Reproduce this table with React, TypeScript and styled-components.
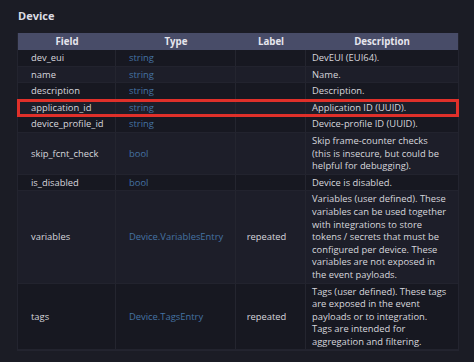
import React from "react";
import styled, { createGlobalStyle } from "styled-components";

const GlobalStyle = createGlobalStyle`
  html, body {
    margin: 0;
    padding: 0;
    background: #1b1c25;
  }
  body {
    font-family: "Open Sans", "Noto Sans", sans-serif;
  }
`;

const Page = styled.div`
  width: 474px;
  height: 362px;
  box-sizing: border-box;
  padding: 8px 15px 0 17px;
  overflow: hidden;
  background: #1b1c25;
`;

const Title = styled.h2`
  margin: 0 0 9px 1px;
  font-size: 11px;
  line-height: 16px;
  font-weight: 700;
  color: #dcdce4;
`;

const Table = styled.div`
  width: 442px;
  border: 1px solid #23242f;
  border-top: none;
  box-sizing: border-box;
`;

const Row = styled.div<{ $dark?: boolean; $header?: boolean; $marked?: boolean }>`
  display: grid;
  grid-template-columns: 98px 120px 70px 1fr;
  background: ${(p) => (p.$header ? "#484c68" : p.$dark ? "#171821" : "#1d1e29")};
  border-bottom: 1px solid ${(p) => (p.$header ? "#484c68" : "#22232e")};
  ${(p) =>
    p.$marked &&
    `
    outline: 3px solid #e0302a;
    outline-offset: -2px;
    position: relative;
  `}
`;

type Align = "left" | "center";

const Cell = styled.div<{ $align?: Align; $pad?: string; $head?: boolean; $link?: boolean; $last?: boolean }>`
  display: flex;
  flex-direction: column;
  justify-content: center;
  align-items: ${(p) => (p.$align === "center" ? "center" : "flex-start")};
  padding: ${(p) => (p.$head ? "1px 4px 0" : p.$pad ?? "2px 13px 1px")};
  font-size: ${(p) => (p.$head ? "9.7px" : "9.4px")};
  line-height: ${(p) => (p.$head ? "15px" : "12.6px")};
  font-weight: ${(p) => (p.$head ? 700 : 400)};
  color: ${(p) => (p.$head ? "#e6e6ee" : p.$link ? "#4573a3" : "#d6d6dc")};
  border-right: ${(p) => (p.$last || p.$head ? "none" : "1px solid #24252f")};
  white-space: nowrap;
`;

const Line = styled.span`
  display: block;
`;

type Field = {
  name: string;
  type: string;
  label?: string;
  desc: string[];
};

const fields: Field[] = [
  { name: "dev_eui", type: "string", desc: ["DevEUI (EUI64)."] },
  { name: "name", type: "string", desc: ["Name."] },
  { name: "description", type: "string", desc: ["Description."] },
  { name: "application_id", type: "string", desc: ["Application ID (UUID)."] },
  { name: "device_profile_id", type: "string", desc: ["Device-profile ID (UUID)."] },
  {
    name: "skip_fcnt_check",
    type: "bool",
    desc: ["Skip frame-counter checks", "(this is insecure, but could be", "helpful for debugging)."],
  },
  { name: "is_disabled", type: "bool", desc: ["Device is disabled."] },
  {
    name: "variables",
    type: "Device.VariablesEntry",
    label: "repeated",
    desc: [
      "Variables (user defined). These",
      "variables can be used together",
      "with integrations to store",
      "tokens / secrets that must be",
      "configured per device. These",
      "variables are not exposed in",
      "the event payloads.",
    ],
  },
  {
    name: "tags",
    type: "Device.TagsEntry",
    label: "repeated",
    desc: [
      "Tags (user defined). These tags",
      "are exposed in the event",
      "payloads or to integration.",
      "Tags are intended for",
      "aggregation and filtering.",
    ],
  },
];

export default function App() {
  return (
    <>
      <GlobalStyle />
      <Page>
        <Title>Device</Title>
        <Table>
          <Row $header>
            <Cell $head $align="center">Field</Cell>
            <Cell $head $align="center">Type</Cell>
            <Cell $head $align="center">Label</Cell>
            <Cell $head $align="center">Description</Cell>
          </Row>
          {fields.map((f, i) => (
            <Row key={f.name} $dark={i % 2 === 0} $marked={f.name === "application_id"}>
              <Cell>{f.name}</Cell>
              <Cell $link>{f.type}</Cell>
              <Cell $align="center" $pad="2px 10px 1px 2px">{f.label ?? ""}</Cell>
              <Cell $pad="2px 4px 1px 6px" $last>
                {f.desc.map((line) => (
                  <Line key={line}>{line}</Line>
                ))}
              </Cell>
            </Row>
          ))}
        </Table>
      </Page>
    </>
  );
}
